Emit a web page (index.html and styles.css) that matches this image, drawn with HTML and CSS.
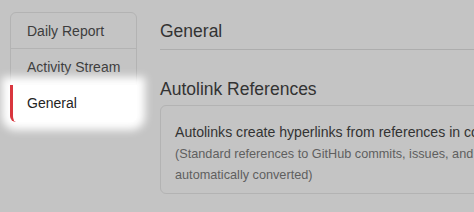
FILE: index.html
```html
<!DOCTYPE html>
<html lang="en">
<head>
    <meta charset="UTF-8">
    <meta name="viewport" content="width=device-width, initial-scale=1.0">
    <title>Settings - General</title>
    <link rel="stylesheet" href="styles.css">
</head>
<body>
    <div class="layout">
        <nav class="menu">
            <a class="menu-item" href="#">Daily Report</a>
            <a class="menu-item" href="#">Activity Stream</a>
            <a class="menu-item selected" href="#">General</a>
        </nav>

        <main class="content">
            <h2 class="page-title">General</h2>

            <h3 class="section-title">Autolink References</h3>
            <div class="panel">
                <p class="panel-lead">Autolinks create hyperlinks from references in commit messages</p>
                <p class="panel-note">(Standard references to GitHub commits, issues, and pull requests are automatically converted)</p>
            </div>
        </main>
    </div>
</body>
</html>
```

FILE: styles.css
```css
body {
    margin: 0;
    background: #c4c4c4;
    font-family: "Liberation Sans", Arial, sans-serif;
    color: #3b3b3b;
    overflow: hidden;
}
.layout {
    display: flex;
    gap: 23px;
    padding: 12px 0 0 10px;
}
.menu {
    flex: 0 0 125px;
    display: flex;
    flex-direction: column;
    align-self: flex-start;
    border: 1px solid #b3b3b3;
    border-radius: 6px;
}
.menu-item {
    height: 35px;
    line-height: 36px;
    padding-left: 16px;
    font-size: 14px;
    color: #3d3d3d;
    text-decoration: none;
    border-bottom: 1px solid #b3b3b3;
}
.menu-item.selected {
    background: #fff;
    color: #242424;
    border-bottom: none;
    border-left: 3px solid #d9363e;
    padding-left: 14px;
    margin: 0 -1px -1px -1px;
    height: 37px;
    line-height: 37px;
    border-radius: 0 0 6px 6px;
    box-shadow: 0 0 8px 8px #fff;
}
.content {
    flex: 1;
    min-width: 0;
}
.page-title {
    margin: 0;
    padding: 9px 0 7px;
    font-size: 17.5px;
    font-weight: normal;
    color: #333;
    border-bottom: 1px solid #adadad;
}
.section-title {
    margin: 29px 0 5px;
    font-size: 17.5px;
    font-weight: normal;
    color: #333;
}
.panel {
    border: 1px solid #b3b3b3;
    border-radius: 6px;
    margin-right: -200px;
    padding: 18px 14px 8px;
    height: 61px;
}
.panel-lead {
    margin: 0 0 4px;
    font-size: 14.1px;
    white-space: nowrap;
    color: #333;
}
.panel-note {
    margin: 0;
    font-size: 12.7px;
    line-height: 21px;
    color: #5f5f5f;
    max-width: 440px;
}
```
